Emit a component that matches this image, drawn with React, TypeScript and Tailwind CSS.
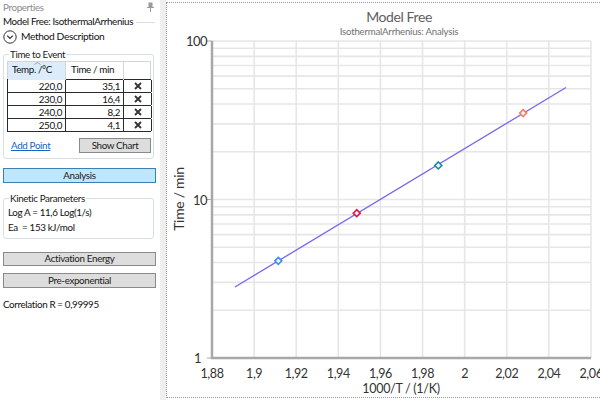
import React from "react";

const rows = [
  { temp: "220,0", time: "35,1" },
  { temp: "230,0", time: "16,4" },
  { temp: "240,0", time: "8,2" },
  { temp: "250,0", time: "4,1" },
];

// plot frame in page pixels
const X0 = 212;
const X1 = 591;
const Y_TOP = 41;
const Y_BOT = 358;
const DECADE = (Y_BOT - Y_TOP) / 2;
const xTicks = ["1,88", "1,9", "1,92", "1,94", "1,96", "1,98", "2", "2,02", "2,04", "2,06"];
const xAt = (i: number) => X0 + (i * (X1 - X0)) / 9;
const yAt = (v: number) => Y_BOT - Math.log10(v) * DECADE;

const points = [
  { u: 1000 / 523.15, t: 4.1, color: "#3b8ff0" },
  { u: 1000 / 513.15, t: 8.2, color: "#e5174c" },
  { u: 1000 / 503.15, t: 16.4, color: "#168a9e" },
  { u: 1000 / 493.15, t: 35.1, color: "#f5805e" },
];
const uToX = (u: number) => X0 + ((u - 1.88) / 0.18) * (X1 - X0);

function Button({ label, className }: { label: string; className?: string }) {
  return (
    <button
      className={
        "flex items-center justify-center whitespace-nowrap border leading-none text-[#1a1a1a] " +
        (className ?? "border-[#8a8a8a] bg-[#dddddd]")
      }
    >
      {label}
    </button>
  );
}

function GroupBox({ title, children, className }: { title: string; children: React.ReactNode; className?: string }) {
  return (
    <fieldset className={"mx-[3px] w-[151px] rounded-[3px] border border-[#d5dfe5] " + (className ?? "")}>
      <legend className="ml-[5px] px-[1px] leading-[13px] text-[#1a1a1a]">{title}</legend>
      {children}
    </fieldset>
  );
}

function PropertiesPanel() {
  return (
    <div className="flex w-[160px] shrink-0 flex-col bg-white text-[9.8px] tracking-[-0.35px] text-[#111]">
      <div className="flex h-[14px] items-center justify-between pl-[3px] pr-[6px] text-[#8a8a8a]">
        <span>Properties</span>
        <svg width="7" height="10" viewBox="0 0 7 10">
          <rect x="1.5" y="0.5" width="4" height="5" fill="#9a9a9a" />
          <rect x="0" y="5" width="7" height="1" fill="#9a9a9a" />
          <rect x="3" y="6" width="1" height="4" fill="#9a9a9a" />
        </svg>
      </div>
      <div className="flex h-[14px] items-center gap-[3px] pl-[3px] pr-[5px]">
        <span className="whitespace-nowrap">Model Free: IsothermalArrhenius</span>
        <div className="mt-[3px] flex-1 border-t border-[#d5dfe5]" />
      </div>
      <div className="mt-[1px] flex h-[15px] items-center gap-[4px] pl-[3px]">
        <svg width="14" height="14" viewBox="0 0 14 14">
          <circle cx="7" cy="7" r="6.2" fill="none" stroke="#333" strokeWidth="1" />
          <path d="M4.2 5.6 L7 8.4 L9.8 5.6" fill="none" stroke="#333" strokeWidth="1.3" />
        </svg>
        <span className="text-[10.2px]">Method Description</span>
      </div>

      <GroupBox title="Time to Event" className="mt-[4px] pb-[5px]">
        <div className="ml-[3px] w-[144px]">
          <div className="grid h-[18px] grid-cols-[58px_58px_28px] whitespace-nowrap border border-b-0 border-[#d5d5d5]">
            <div className="relative flex items-end border-r border-[#d5d5d5] bg-[#dcecfa] pb-[3px] pl-[4px]">
              <svg className="absolute left-[26px] top-0" width="7" height="3" viewBox="0 0 7 3">
                <path d="M0.5 2.5 L3.5 0.5 L6.5 2.5" fill="none" stroke="#8ca0b4" strokeWidth="1" />
              </svg>
              Temp. /°C
            </div>
            <div className="flex items-end border-r border-[#d5d5d5] pb-[3px] pl-[5px]">Time / min</div>
            <div />
          </div>
          <div className="border-t border-l border-[#2a2a2a]">
            {rows.map((r) => (
              <div
                key={r.temp}
                className="grid h-[13px] grid-cols-[58px_58px_28px] border-b border-[#2a2a2a] leading-[12px]"
              >
                <div className="border-r border-[#2a2a2a] pr-[3px] text-right">{r.temp}</div>
                <div className="border-r border-[#2a2a2a] pr-[3px] text-right">{r.time}</div>
                <div className="flex items-center justify-center border-r border-[#2a2a2a]">
                  <svg width="8" height="8" viewBox="0 0 8 8">
                    <path d="M1 1 L7 7 M7 1 L1 7" stroke="#333" strokeWidth="1.8" />
                  </svg>
                </div>
              </div>
            ))}
          </div>
        </div>
        <div className="mt-[6px] flex h-[15px] items-center justify-between pl-[7px] pr-[2px]">
          <a className="cursor-pointer text-[#1565c0] underline">Add Point</a>
          <Button label="Show Chart" className="h-[15px] w-[72px] border-[#8a8a8a] bg-[#dddddd]" />
        </div>
      </GroupBox>

      <div className="mx-[3px] mt-[9px]">
        <Button label="Analysis" className="h-[15px] w-[153px] border-[#3c7fb1] bg-[#bee6fd]" />
      </div>

      <GroupBox title="Kinetic Parameters" className="mt-[9px] pb-[4px]">
        <div className="flex flex-col gap-[2px] pl-[4px] pt-[1px] leading-[13px]">
          <span>Log A = 11,6 Log(1/s)</span>
          <span className="whitespace-pre">Ea  = 153 kJ/mol</span>
        </div>
      </GroupBox>

      <div className="mx-[3px] mt-[13px] flex flex-col gap-[7px]">
        <Button label="Activation Energy" className="h-[14px] w-[153px] border-[#8a8a8a] bg-[#dddddd]" />
        <Button label="Pre-exponential" className="h-[15px] w-[153px] border-[#8a8a8a] bg-[#dddddd]" />
      </div>

      <div className="mt-[9px] pl-[3px]">Correlation R = 0,99995</div>
    </div>
  );
}

function ArrheniusChart() {
  const hLines: number[] = [Y_TOP];
  for (let d = 0; d < 2; d++) {
    for (let k = 1; k <= 9; k++) hLines.push(Y_BOT - (d + Math.log10(k)) * DECADE);
  }
  return (
    <svg width="433" height="394" viewBox="167 3 433 394" className="block" fontFamily="Lato, sans-serif">
      <text x="399" y="22" textAnchor="middle" fontSize="14" letterSpacing="-0.4" fill="#606060">
        Model Free
      </text>
      <text x="399" y="35" textAnchor="middle" fontSize="9.6" letterSpacing="-0.2" fill="#707070">
        IsothermalArrhenius: Analysis
      </text>

      {hLines.map((y, i) => (
        <line key={"h" + i} x1={X0} x2={X1} y1={y} y2={y} stroke="#e6e6e6" strokeWidth="1.6" />
      ))}
      {xTicks.map((_, i) => (
        <line key={"v" + i} x1={xAt(i)} x2={xAt(i)} y1={Y_TOP} y2={Y_BOT} stroke="#e6e6e6" strokeWidth="1.6" />
      ))}

      <line x1={X0} x2={X0} y1={Y_TOP} y2={Y_BOT + 1} stroke="#a8a8a8" strokeWidth="2.5" />
      <line x1={X0 - 1} x2={X1} y1={Y_BOT} y2={Y_BOT} stroke="#a8a8a8" strokeWidth="2.5" />
      {[100, 10, 1].map((v) => (
        <line key={"t" + v} x1={X0 - 5} x2={X0} y1={yAt(v)} y2={yAt(v)} stroke="#a8a8a8" strokeWidth="1" />
      ))}

      {[100, 10, 1].map((v) => (
        <text
          key={"yl" + v}
          x={v === 1 ? 201 : 207}
          y={yAt(v) + 5}
          textAnchor="end"
          fontSize="13"
          letterSpacing="-0.5"
          fill="#333"
        >
          {v}
        </text>
      ))}
      {xTicks.map((t, i) => (
        <text key={"xl" + i} x={xAt(i)} y="377.5" textAnchor="middle" fontSize="12.5" letterSpacing="-0.4" fill="#333">
          {t}
        </text>
      ))}

      <text x="401" y="392.5" textAnchor="middle" fontSize="12.5" letterSpacing="-0.3" fill="#333">
        1000/T / (1/K)
      </text>
      <text
        x="184"
        y="199"
        textAnchor="middle"
        fontSize="14"
        letterSpacing="-0.3"
        fill="#333"
        transform="rotate(-90 184 199)"
      >
        Time / min
      </text>

      <line x1="235" y1="287" x2="566" y2="87.5" stroke="#7466f0" strokeWidth="1.3" />

      {points.map((p) => {
        const cx = uToX(p.u);
        const cy = yAt(p.t);
        return (
          <path
            key={p.t}
            d={`M${cx} ${cy - 3.5} L${cx + 3.5} ${cy} L${cx} ${cy + 3.5} L${cx - 3.5} ${cy} Z`}
            fill="#eef4ff"
            stroke={p.color}
            strokeWidth="1.6"
          />
        );
      })}
    </svg>
  );
}

export default function App() {
  return (
    <div className="flex h-[400px] w-[600px] overflow-hidden bg-white font-['Lato',sans-serif]">
      <PropertiesPanel />
      <div className="w-[6px] shrink-0 bg-[#efefef]" />
      <div className="mt-[2px] h-[396px] flex-1 overflow-hidden border-t border-b border-l border-dotted border-[#9a9a9a]">
        <ArrheniusChart />
      </div>
    </div>
  );
}
